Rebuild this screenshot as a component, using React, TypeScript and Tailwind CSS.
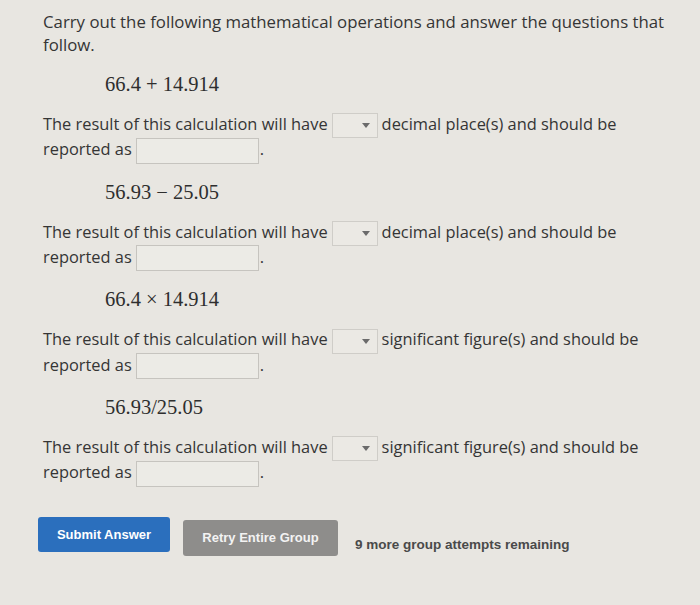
import React from 'react';

const groups = [
  { expr: '66.4 + 14.914', unit: 'decimal place(s)' },
  { expr: '56.93 − 25.05', unit: 'decimal place(s)' },
  { expr: '66.4 × 14.914', unit: 'significant figure(s)' },
  { expr: '56.93/25.05', unit: 'significant figure(s)' },
];

function Dropdown() {
  return (
    <span className="inline-flex align-middle items-center justify-end w-[46px] h-[25px] mx-[4px] -my-[2px] border border-[#cfcdc8] bg-[#ebe9e4] pr-[7px]">
      <svg width="8" height="5" viewBox="0 0 8 5">
        <path d="M0 0 L8 0 L4 5 Z" fill="#6b6b6b" />
      </svg>
    </span>
  );
}

function Blank() {
  return (
    <span className="inline-block align-middle w-[123px] h-[26px] ml-[4px] -my-[2px] border border-[#c6c4bf] bg-[#ecebe6]" />
  );
}

export default function App() {
  return (
    <div
      className="w-[700px] h-[605px] bg-[#e8e6e1] text-[#353535] pl-[43px] pt-[10px]"
      style={{ fontFamily: '"Open Sans", "Liberation Sans", sans-serif' }}
    >
      <p className="w-[635px] text-[16.8px] leading-[23px]">
        Carry out the following mathematical operations and answer the questions that follow.
      </p>

      {groups.map((g, i) => (
        <div key={i} className={i === 0 ? 'mt-[13px]' : 'mt-[15px]'}>
          <div
            className="pl-[62px] text-[20.5px] leading-[30px] text-[#2e2e2e]"
            style={{ fontFamily: '"Liberation Serif", "DejaVu Serif", serif' }}
          >
            {g.expr}
          </div>
          <p className="mt-[12px] text-[16.4px] leading-[25px]">
            The result of this calculation will have
            <Dropdown />
            {g.unit} and should be
            <br />
            reported as
            <Blank />
            <span className="ml-[1px]">.</span>
          </p>
        </div>
      ))}

      <div
        className="flex items-center mt-[29px] -ml-[5px] gap-[13px]"
        style={{ fontFamily: '"Liberation Sans", Arial, sans-serif' }}
      >
        <button className="w-[132px] h-[35px] rounded-[3px] bg-[#2b6fbd] text-white text-[13px] font-bold">
          Submit Answer
        </button>
        <button className="w-[155px] h-[36px] mt-[6px] rounded-[3px] bg-[#8e8d8b] text-[#f3f3f3] text-[13px] font-bold">
          Retry Entire Group
        </button>
        <span className="ml-[4px] mt-[20px] text-[13.5px] font-bold text-[#4a4a4a]">
          9 more group attempts remaining
        </span>
      </div>
    </div>
  );
}
